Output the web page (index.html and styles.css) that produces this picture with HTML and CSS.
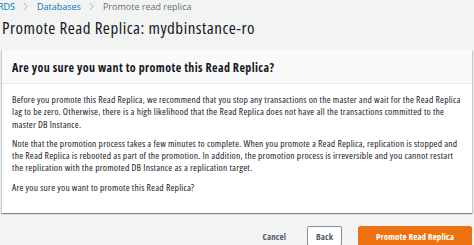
FILE: index.html
```html
<!DOCTYPE html>
<html lang="en">
<head>
    <meta charset="UTF-8">
    <title>Promote Read Replica</title>
    <link rel="stylesheet" href="styles.css">
</head>
<body>
    <div class="crumbs">
        <a href="#" class="crumb">RDS</a>
        <svg class="sep" width="5" height="9" viewBox="0 0 5 9"><polyline points="1,1 4,4.5 1,8" fill="none" stroke="#aab7b8" stroke-width="1"/></svg>
        <a href="#" class="crumb">Databases</a>
        <svg class="sep" width="5" height="9" viewBox="0 0 5 9"><polyline points="1,1 4,4.5 1,8" fill="none" stroke="#aab7b8" stroke-width="1"/></svg>
        <span class="crumb current">Promote read replica</span>
    </div>

    <h1 class="title">Promote Read Replica: mydbinstance-ro</h1>

    <div class="card">
        <div class="card-head">
            <h2>Are you sure you want to promote this Read Replica?</h2>
        </div>
        <div class="card-body">
            <p>Before you promote this Read Replica, we recommend that you stop any transactions on the master and wait for the Read Replica lag to be zero. Otherwise, there is a high likelihood that the Read Replica does not have all the transactions committed to the master DB Instance.</p>
            <p>Note that the promotion process takes a few minutes to complete. When you promote a Read Replica, replication is stopped and the Read Replica is rebooted as part of the promotion. In addition, the promotion process is irreversible and you cannot restart the replication with the promoted DB Instance as a replication target.</p>
            <p>Are you sure you want to promote this Read Replica?</p>
        </div>
    </div>

    <div class="actions">
        <button class="button link">Cancel</button>
        <button class="button normal">Back</button>
        <button class="button primary">Promote Read Replica</button>
    </div>
</body>
</html>
```

FILE: styles.css
```css
html, body {
  margin: 0;
  padding: 0;
}

body {
  background: #f2f3f3;
  font-family: "Open Sans", "Liberation Sans", sans-serif;
  color: #16191f;
  height: 245px;
  overflow: hidden;
}

.crumbs {
  display: flex;
  align-items: center;
  height: 13px;
  margin-left: -2px;
  font-size: 9px;
  font-stretch: 95%;
}

.crumb {
  color: #0073bb;
  text-decoration: none;
}

.crumb.current {color: #687078;}

.sep {
  margin: 0 9px 0 8px;
}

.title {
  margin: 4px 0 0 2px;
  font-size: 17px;
  font-stretch: 75%;
  letter-spacing: 0.5px;
  font-weight: normal;
  line-height: 22px;
}

.card {
  margin: 11px 2px 0 2px;
  background: white;
  box-shadow: 0 1px 1px rgba(0, 28, 36, 0.3), 1px 1px 1px rgba(0, 28, 36, 0.15), -1px 1px 1px rgba(0, 28, 36, 0.15);
}

.card-head {
  background: #fafafa;
  border-bottom: 1px solid #eaeded;
  padding: 10px 10px 8px 10px;
  height: 15px;
}

.card-head h2 {
  margin: 0;
  font-size: 12px;
  font-stretch: 75%;
  letter-spacing: 0.4px;
  line-height: 15px;
  font-weight: bold;
}

.card-body {
  padding: 10px 11px 19px 10px;
  font-size: 9.5px;
  font-stretch: 75%;
  letter-spacing: 0.22px;
  line-height: 12.3px;
}

.card-body p {
  margin: 0 0 7px 0;
}

.card-body p:last-child {margin-bottom: 0;}

.actions {
  display: flex;
  justify-content: flex-end;
  align-items: center;
  gap: 16px;
  margin: 13px 2px 0 0;
}

.button {
  font-family: inherit;
  font-stretch: 75%;
  letter-spacing: 0.1px;
  font-size: 9px;
  font-weight: bold;
  height: 20px;
  border-radius: 2px;
  cursor: pointer;
  padding: 0;
}

.link {
  background: none;
  border: none;
  color: #545b64;
  margin-right: 5px;
}

.normal {
  background: white;
  border: 1px solid #879196;
  color: #545b64;
  width: 35px;
}

.primary {
  background: #ec7211;
  border: 1px solid #ec7211;
  color: white;
  width: 114px;
}
```
